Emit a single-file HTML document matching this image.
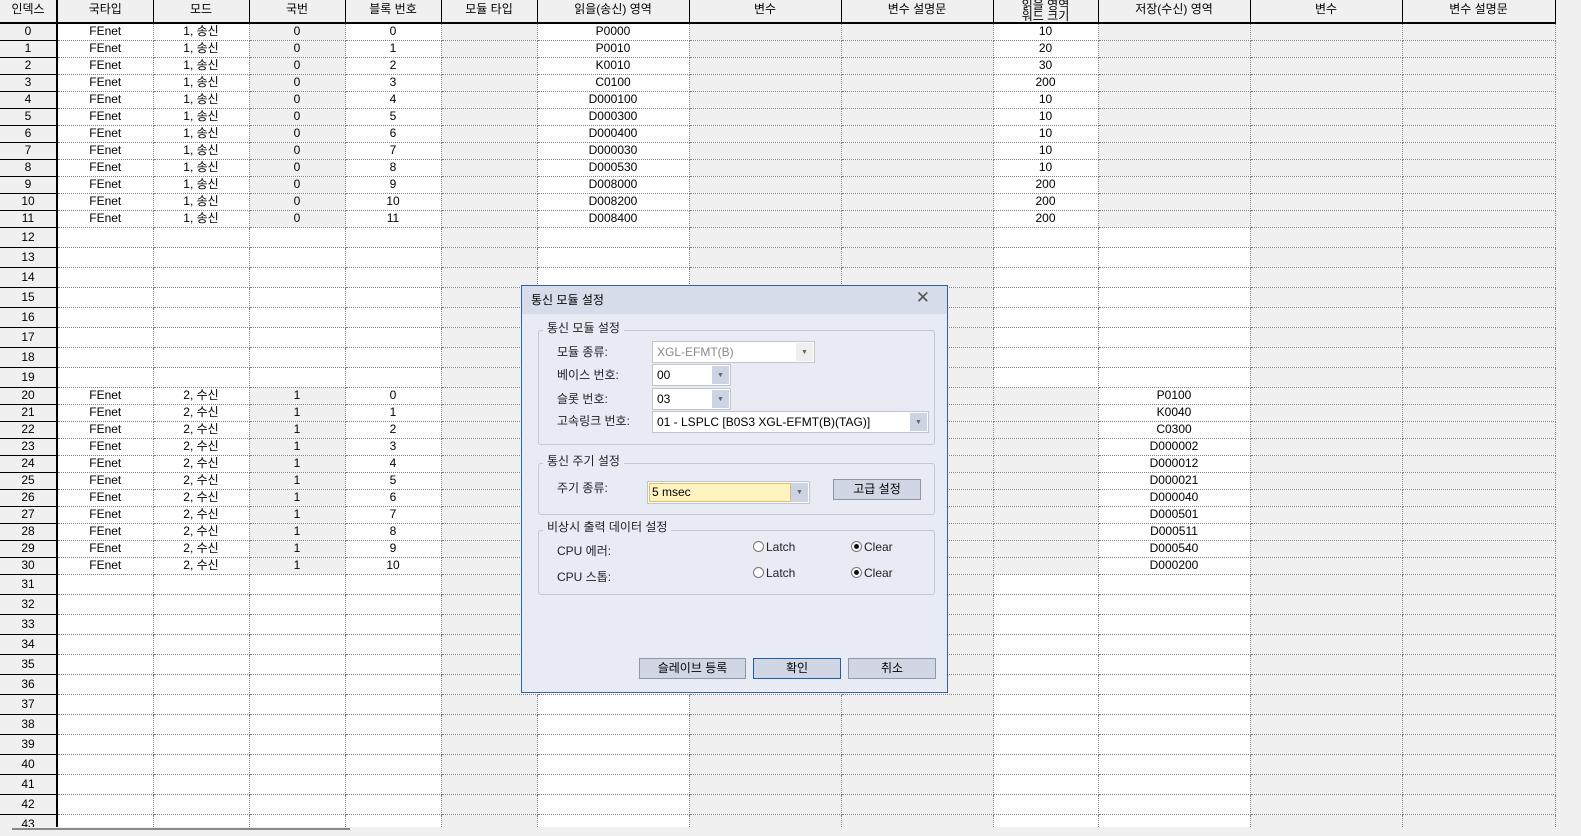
<!DOCTYPE html>
<html><head><meta charset="utf-8"><style>
*{box-sizing:border-box;margin:0;padding:0}
body{width:1581px;height:836px;overflow:hidden;background:#f0f0f0;font-family:"Liberation Sans","Noto Sans CJK KR",sans-serif;font-size:12px;color:#000;position:relative}
table{position:absolute;left:0;top:0;border-collapse:collapse;table-layout:fixed;width:1555px;background:#fff}
td,th{border-right:1px dotted #808080;border-bottom:1px dotted #808080;text-align:center;white-space:nowrap;overflow:hidden;padding:0;font-weight:normal;line-height:13px}
th{background:#f0f0f0;border-right:1px solid #000;border-bottom:2px solid #000;height:22px;vertical-align:bottom;padding-bottom:6px}
td:first-child,th:first-child{background:#f0f0f0;border-right:2px solid #000}
td:first-child{border-bottom:1px solid #000}
tr.a td{height:17px}tr.b td{height:20px}
.g{background:#f0f0f0}
#bot{position:absolute;left:0;top:827px;width:1581px;height:9px;background:#f0f0f0}
#bot div{position:absolute;left:12px;top:1px;width:338px;height:2px;background:#888}
#dlg{position:absolute;left:521px;top:285px;width:427px;height:408px;background:#e8ebf4;border:1px solid #2a64a8}
#tb{height:28px;background:#d6dcea;padding:5px 0 0 9px;font-size:12px}
#x{position:absolute;right:17px;top:2px;font-size:17px;color:#555}
.grp{position:absolute;border:1px solid #c4c8d2;border-radius:3px}
.gl{position:absolute;background:#e8ebf4;padding:0 4px;font-size:12px;color:#222}
.lb{position:absolute;font-size:12px;color:#222}
.cb{position:absolute;background:#fff;border:1px solid #c0c4cc;height:22px;padding:3px 0 0 4px;font-size:12px}
.cb i{position:absolute;right:1px;top:1px;bottom:1px;width:17px;background:#ccd3e2;font-style:normal;font-size:7px;color:#666;text-align:center;line-height:19px}
.bt{position:absolute;background:#d0d6e4;border:1px solid #8f96a6;height:21px;text-align:center;line-height:18px;font-size:12px}
.rd{position:absolute;font-size:12px;color:#222}
.rd b{display:inline-block;width:11px;height:11px;border:1px solid #777;border-radius:50%;background:#fff;vertical-align:-1px;margin-right:2px;position:relative}
.rd b.on:after{content:"";position:absolute;left:2px;top:2px;width:5px;height:5px;border-radius:50%;background:#111}
</style></head><body>
<table>
<colgroup><col style="width:57px"><col style="width:96px"><col style="width:96px"><col style="width:96px"><col style="width:96px"><col style="width:96px"><col style="width:152px"><col style="width:152px"><col style="width:152px"><col style="width:105px"><col style="width:152px"><col style="width:152px"><col style="width:153px"></colgroup>
<tr><th>인덱스</th><th>국타입</th><th>모드</th><th>국번</th><th>블록 번호</th><th>모듈 타입</th><th>읽을(송신) 영역</th><th>변수</th><th>변수 설명문</th><th style="padding-bottom:0;line-height:11px">읽을 영역<br>워드 크기</th><th>저장(수신) 영역</th><th>변수</th><th>변수 설명문</th></tr>
<tr class="a"><td>0</td><td>FEnet</td><td>1, 송신</td><td class="g">0</td><td>0</td><td class="g"></td><td>P0000</td><td class="g"></td><td class="g"></td><td>10</td><td class="g"></td><td class="g"></td><td class="g"></td></tr>
<tr class="a"><td>1</td><td>FEnet</td><td>1, 송신</td><td class="g">0</td><td>1</td><td class="g"></td><td>P0010</td><td class="g"></td><td class="g"></td><td>20</td><td class="g"></td><td class="g"></td><td class="g"></td></tr>
<tr class="a"><td>2</td><td>FEnet</td><td>1, 송신</td><td class="g">0</td><td>2</td><td class="g"></td><td>K0010</td><td class="g"></td><td class="g"></td><td>30</td><td class="g"></td><td class="g"></td><td class="g"></td></tr>
<tr class="a"><td>3</td><td>FEnet</td><td>1, 송신</td><td class="g">0</td><td>3</td><td class="g"></td><td>C0100</td><td class="g"></td><td class="g"></td><td>200</td><td class="g"></td><td class="g"></td><td class="g"></td></tr>
<tr class="a"><td>4</td><td>FEnet</td><td>1, 송신</td><td class="g">0</td><td>4</td><td class="g"></td><td>D000100</td><td class="g"></td><td class="g"></td><td>10</td><td class="g"></td><td class="g"></td><td class="g"></td></tr>
<tr class="a"><td>5</td><td>FEnet</td><td>1, 송신</td><td class="g">0</td><td>5</td><td class="g"></td><td>D000300</td><td class="g"></td><td class="g"></td><td>10</td><td class="g"></td><td class="g"></td><td class="g"></td></tr>
<tr class="a"><td>6</td><td>FEnet</td><td>1, 송신</td><td class="g">0</td><td>6</td><td class="g"></td><td>D000400</td><td class="g"></td><td class="g"></td><td>10</td><td class="g"></td><td class="g"></td><td class="g"></td></tr>
<tr class="a"><td>7</td><td>FEnet</td><td>1, 송신</td><td class="g">0</td><td>7</td><td class="g"></td><td>D000030</td><td class="g"></td><td class="g"></td><td>10</td><td class="g"></td><td class="g"></td><td class="g"></td></tr>
<tr class="a"><td>8</td><td>FEnet</td><td>1, 송신</td><td class="g">0</td><td>8</td><td class="g"></td><td>D000530</td><td class="g"></td><td class="g"></td><td>10</td><td class="g"></td><td class="g"></td><td class="g"></td></tr>
<tr class="a"><td>9</td><td>FEnet</td><td>1, 송신</td><td class="g">0</td><td>9</td><td class="g"></td><td>D008000</td><td class="g"></td><td class="g"></td><td>200</td><td class="g"></td><td class="g"></td><td class="g"></td></tr>
<tr class="a"><td>10</td><td>FEnet</td><td>1, 송신</td><td class="g">0</td><td>10</td><td class="g"></td><td>D008200</td><td class="g"></td><td class="g"></td><td>200</td><td class="g"></td><td class="g"></td><td class="g"></td></tr>
<tr class="a"><td>11</td><td>FEnet</td><td>1, 송신</td><td class="g">0</td><td>11</td><td class="g"></td><td>D008400</td><td class="g"></td><td class="g"></td><td>200</td><td class="g"></td><td class="g"></td><td class="g"></td></tr>
<tr class="b"><td>12</td><td></td><td></td><td></td><td></td><td class="g"></td><td></td><td class="g"></td><td class="g"></td><td></td><td></td><td class="g"></td><td class="g"></td></tr>
<tr class="b"><td>13</td><td></td><td></td><td></td><td></td><td class="g"></td><td></td><td class="g"></td><td class="g"></td><td></td><td></td><td class="g"></td><td class="g"></td></tr>
<tr class="b"><td>14</td><td></td><td></td><td></td><td></td><td class="g"></td><td></td><td class="g"></td><td class="g"></td><td></td><td></td><td class="g"></td><td class="g"></td></tr>
<tr class="b"><td>15</td><td></td><td></td><td></td><td></td><td class="g"></td><td></td><td class="g"></td><td class="g"></td><td></td><td></td><td class="g"></td><td class="g"></td></tr>
<tr class="b"><td>16</td><td></td><td></td><td></td><td></td><td class="g"></td><td></td><td class="g"></td><td class="g"></td><td></td><td></td><td class="g"></td><td class="g"></td></tr>
<tr class="b"><td>17</td><td></td><td></td><td></td><td></td><td class="g"></td><td></td><td class="g"></td><td class="g"></td><td></td><td></td><td class="g"></td><td class="g"></td></tr>
<tr class="b"><td>18</td><td></td><td></td><td></td><td></td><td class="g"></td><td></td><td class="g"></td><td class="g"></td><td></td><td></td><td class="g"></td><td class="g"></td></tr>
<tr class="b"><td>19</td><td></td><td></td><td></td><td></td><td class="g"></td><td></td><td class="g"></td><td class="g"></td><td></td><td></td><td class="g"></td><td class="g"></td></tr>
<tr class="a"><td>20</td><td>FEnet</td><td>2, 수신</td><td class="g">1</td><td>0</td><td class="g"></td><td></td><td class="g"></td><td class="g"></td><td class="g"></td><td>P0100</td><td class="g"></td><td class="g"></td></tr>
<tr class="a"><td>21</td><td>FEnet</td><td>2, 수신</td><td class="g">1</td><td>1</td><td class="g"></td><td></td><td class="g"></td><td class="g"></td><td class="g"></td><td>K0040</td><td class="g"></td><td class="g"></td></tr>
<tr class="a"><td>22</td><td>FEnet</td><td>2, 수신</td><td class="g">1</td><td>2</td><td class="g"></td><td></td><td class="g"></td><td class="g"></td><td class="g"></td><td>C0300</td><td class="g"></td><td class="g"></td></tr>
<tr class="a"><td>23</td><td>FEnet</td><td>2, 수신</td><td class="g">1</td><td>3</td><td class="g"></td><td></td><td class="g"></td><td class="g"></td><td class="g"></td><td>D000002</td><td class="g"></td><td class="g"></td></tr>
<tr class="a"><td>24</td><td>FEnet</td><td>2, 수신</td><td class="g">1</td><td>4</td><td class="g"></td><td></td><td class="g"></td><td class="g"></td><td class="g"></td><td>D000012</td><td class="g"></td><td class="g"></td></tr>
<tr class="a"><td>25</td><td>FEnet</td><td>2, 수신</td><td class="g">1</td><td>5</td><td class="g"></td><td></td><td class="g"></td><td class="g"></td><td class="g"></td><td>D000021</td><td class="g"></td><td class="g"></td></tr>
<tr class="a"><td>26</td><td>FEnet</td><td>2, 수신</td><td class="g">1</td><td>6</td><td class="g"></td><td></td><td class="g"></td><td class="g"></td><td class="g"></td><td>D000040</td><td class="g"></td><td class="g"></td></tr>
<tr class="a"><td>27</td><td>FEnet</td><td>2, 수신</td><td class="g">1</td><td>7</td><td class="g"></td><td></td><td class="g"></td><td class="g"></td><td class="g"></td><td>D000501</td><td class="g"></td><td class="g"></td></tr>
<tr class="a"><td>28</td><td>FEnet</td><td>2, 수신</td><td class="g">1</td><td>8</td><td class="g"></td><td></td><td class="g"></td><td class="g"></td><td class="g"></td><td>D000511</td><td class="g"></td><td class="g"></td></tr>
<tr class="a"><td>29</td><td>FEnet</td><td>2, 수신</td><td class="g">1</td><td>9</td><td class="g"></td><td></td><td class="g"></td><td class="g"></td><td class="g"></td><td>D000540</td><td class="g"></td><td class="g"></td></tr>
<tr class="a"><td>30</td><td>FEnet</td><td>2, 수신</td><td class="g">1</td><td>10</td><td class="g"></td><td></td><td class="g"></td><td class="g"></td><td class="g"></td><td>D000200</td><td class="g"></td><td class="g"></td></tr>
<tr class="b"><td>31</td><td></td><td></td><td></td><td></td><td class="g"></td><td></td><td class="g"></td><td class="g"></td><td></td><td></td><td class="g"></td><td class="g"></td></tr>
<tr class="b"><td>32</td><td></td><td></td><td></td><td></td><td class="g"></td><td></td><td class="g"></td><td class="g"></td><td></td><td></td><td class="g"></td><td class="g"></td></tr>
<tr class="b"><td>33</td><td></td><td></td><td></td><td></td><td class="g"></td><td></td><td class="g"></td><td class="g"></td><td></td><td></td><td class="g"></td><td class="g"></td></tr>
<tr class="b"><td>34</td><td></td><td></td><td></td><td></td><td class="g"></td><td></td><td class="g"></td><td class="g"></td><td></td><td></td><td class="g"></td><td class="g"></td></tr>
<tr class="b"><td>35</td><td></td><td></td><td></td><td></td><td class="g"></td><td></td><td class="g"></td><td class="g"></td><td></td><td></td><td class="g"></td><td class="g"></td></tr>
<tr class="b"><td>36</td><td></td><td></td><td></td><td></td><td class="g"></td><td></td><td class="g"></td><td class="g"></td><td></td><td></td><td class="g"></td><td class="g"></td></tr>
<tr class="b"><td>37</td><td></td><td></td><td></td><td></td><td class="g"></td><td></td><td class="g"></td><td class="g"></td><td></td><td></td><td class="g"></td><td class="g"></td></tr>
<tr class="b"><td>38</td><td></td><td></td><td></td><td></td><td class="g"></td><td></td><td class="g"></td><td class="g"></td><td></td><td></td><td class="g"></td><td class="g"></td></tr>
<tr class="b"><td>39</td><td></td><td></td><td></td><td></td><td class="g"></td><td></td><td class="g"></td><td class="g"></td><td></td><td></td><td class="g"></td><td class="g"></td></tr>
<tr class="b"><td>40</td><td></td><td></td><td></td><td></td><td class="g"></td><td></td><td class="g"></td><td class="g"></td><td></td><td></td><td class="g"></td><td class="g"></td></tr>
<tr class="b"><td>41</td><td></td><td></td><td></td><td></td><td class="g"></td><td></td><td class="g"></td><td class="g"></td><td></td><td></td><td class="g"></td><td class="g"></td></tr>
<tr class="b"><td>42</td><td></td><td></td><td></td><td></td><td class="g"></td><td></td><td class="g"></td><td class="g"></td><td></td><td></td><td class="g"></td><td class="g"></td></tr>
<tr class="b"><td>43</td><td></td><td></td><td></td><td></td><td class="g"></td><td></td><td class="g"></td><td class="g"></td><td></td><td></td><td class="g"></td><td class="g"></td></tr>
</table>
<div id="bot"><div></div></div>

<div id="dlg">
<div id="tb">통신 모듈 설정</div><div id="x">✕</div>
<div class="grp" style="left:16px;top:44px;width:397px;height:115px"></div>
<div class="gl" style="left:21px;top:33px">통신 모듈 설정</div>
<div class="lb" style="left:35px;top:57px">모듈 종류:</div>
<div class="cb" style="left:130px;top:55px;width:163px;color:#888">XGL-EFMT(B)<i style="background:#eee">▼</i></div>
<div class="lb" style="left:35px;top:80px">베이스 번호:</div>
<div class="cb" style="left:130px;top:78px;width:79px">00<i>▼</i></div>
<div class="lb" style="left:35px;top:104px">슬롯 번호:</div>
<div class="cb" style="left:130px;top:102px;width:79px">03<i>▼</i></div>
<div class="lb" style="left:35px;top:126px">고속링크 번호:</div>
<div class="cb" style="left:130px;top:125px;width:277px">01 - LSPLC [B0S3 XGL-EFMT(B)(TAG)]<i>▼</i></div>

<div class="grp" style="left:16px;top:177px;width:397px;height:52px"></div>
<div class="gl" style="left:21px;top:166px">통신 주기 설정</div>
<div class="lb" style="left:35px;top:193px">주기 종류:</div>
<div class="cb" style="left:125px;top:195px;width:163px;height:23px;padding:0;background:#fff;border-color:#c0c4cc"><div style="position:absolute;left:1px;top:1px;width:142px;height:19px;background:#fff3c0;border:1px solid #d8c070;padding:1px 0 0 2px">5 msec</div><i>▼</i></div>
<div class="bt" style="left:311px;top:193px;width:88px">고급 설정</div>

<div class="grp" style="left:16px;top:244px;width:397px;height:65px"></div>
<div class="gl" style="left:21px;top:232px">비상시 출력 데이터 설정</div>
<div class="lb" style="left:35px;top:256px">CPU 에러:</div>
<div class="lb" style="left:35px;top:282px">CPU 스톱:</div>
<div class="rd" style="left:231px;top:254px"><b></b>Latch</div>
<div class="rd" style="left:329px;top:254px"><b class="on"></b>Clear</div>
<div class="rd" style="left:231px;top:280px"><b></b>Latch</div>
<div class="rd" style="left:329px;top:280px"><b class="on"></b>Clear</div>

<div class="bt" style="left:117px;top:372px;width:107px">슬레이브 등록</div>
<div class="bt" style="left:231px;top:372px;width:88px;border-color:#1e5fa8">확인</div>
<div class="bt" style="left:326px;top:372px;width:88px">취소</div>
</div>
</body></html>
